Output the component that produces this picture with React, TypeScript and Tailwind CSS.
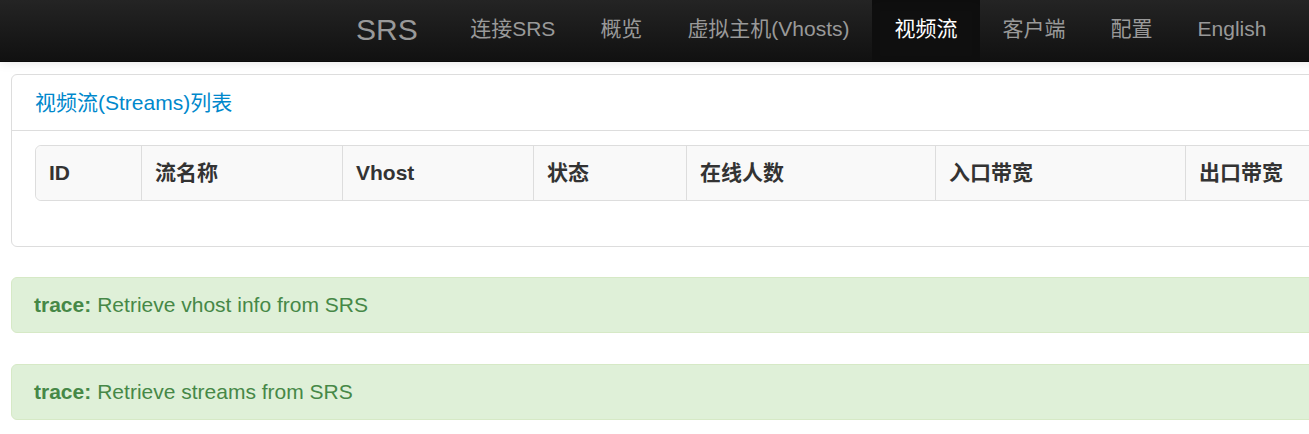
import React from 'react';

const navItems = ['连接SRS', '概览', '虚拟主机(Vhosts)', '视频流', '客户端', '配置', 'English'];

const columns: { label: string; w: string }[] = [
  { label: 'ID', w: 'w-[105px]' },
  { label: '流名称', w: 'w-[201px]' },
  { label: 'Vhost', w: 'w-[191px]' },
  { label: '状态', w: 'w-[153px]' },
  { label: '在线人数', w: 'w-[249px]' },
  { label: '入口带宽', w: 'w-[250px]' },
  { label: '出口带宽', w: 'w-[200px]' },
  { label: '编码信息', w: 'w-[200px]' },
];

const Alert: React.FC<{ msg: string }> = ({ msg }) => (
  <div className="mb-[31px] h-[56px] flex items-center pl-[22px] bg-[#dff0d8] border border-[#d6e9c6] rounded-[6px] text-[#468847] text-[21px] leading-[30px]">
    <strong className="font-bold mr-[6px]">trace:</strong>
    <span>{msg}</span>
  </div>
);

const App: React.FC = () => {
  return (
    <div className="w-full min-h-[434px] overflow-hidden bg-white font-['Liberation_Sans','Noto_Sans_CJK_SC',sans-serif]">
      <div className="w-[1700px]">
        {/* navbar */}
        <div className="h-[62px] border-b border-[#0a0a0a] bg-gradient-to-b from-[#242424] to-[#111111] shadow-[0_1px_10px_rgba(0,0,0,0.1)]">
          <div className="flex h-full items-stretch pl-[326px]">
            <a className="flex items-center px-[30px] pb-[3px] text-[30px] text-[#999999]">SRS</a>
            <ul className="flex items-stretch">
              {navItems.map((item) => {
                const active = item === '视频流';
                return (
                  <li
                    key={item}
                    className={
                      active
                        ? 'flex items-center px-[22.5px] pb-[3px] text-[21px] text-white bg-[#0f0f0f] shadow-[inset_0_3px_8px_rgba(0,0,0,0.125)]'
                        : 'flex items-center px-[22.5px] pb-[3px] text-[21px] text-[#999999]'
                    }
                  >
                    {item}
                  </li>
                );
              })}
            </ul>
          </div>
        </div>

        <div className="pl-[11px] pt-[12px]">
          {/* streams panel */}
          <div className="mb-[30px] border border-[#dddddd] rounded-[6px] bg-white">
            <div className="h-[56px] flex items-center px-[23px] border-b border-[#dddddd] text-[21px] text-[#0088cc]">
              视频流(Streams)列表
            </div>
            <div className="pt-[14px] pb-[15px] px-[23px]">
              <table className="mb-[30px] border-separate border-spacing-0 border border-[#dddddd] rounded-[6px] text-[21px] text-[#333333]">
                <thead>
                  <tr>
                    {columns.map((c, i) => (
                      <th
                        key={c.label}
                        className={
                          (i === 0 ? 'rounded-tl-[6px] rounded-bl-[6px] ' : 'border-l border-[#dddddd] ') +
                          c.w +
                          ' h-[54px] px-[13px] text-left font-bold bg-[#f9f9f9] leading-[30px]'
                        }
                      >
                        {c.label}
                      </th>
                    ))}
                  </tr>
                </thead>
                <tbody></tbody>
              </table>
            </div>
          </div>

          <Alert msg="Retrieve vhost info from SRS" />
          <Alert msg="Retrieve streams from SRS" />
        </div>
      </div>
    </div>
  );
};

export default App;
